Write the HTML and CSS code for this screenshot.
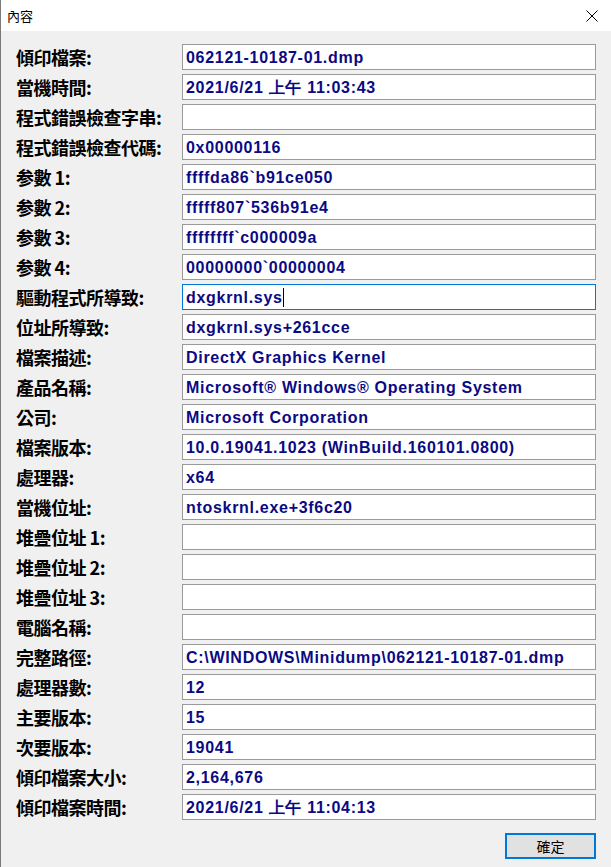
FILE: index.html
```html
<!DOCTYPE html>
<html lang="zh-Hant">
<head>
<meta charset="utf-8">
<title>內容</title>
<link rel="stylesheet" href="styles.css">
</head>
<body>
<div class="window">
  <div class="titlebar">
    <span class="title">內容</span>
    <svg class="close" width="12" height="12" viewBox="0 0 12 12"><path d="M0.5 0.5 L11.5 11.5 M11.5 0.5 L0.5 11.5" stroke="#000" stroke-width="1" fill="none"/></svg>
  </div>
  <div class="content">
    <div class="grid">
      <div class="label">傾印檔案:</div><div class="box">062121-10187-01.dmp</div>
      <div class="label">當機時間:</div><div class="box">2021/6/21 上午 11:03:43</div>
      <div class="label">程式錯誤檢查字串:</div><div class="box"></div>
      <div class="label">程式錯誤檢查代碼:</div><div class="box">0x00000116</div>
      <div class="label">参數 1:</div><div class="box">ffffda86`b91ce050</div>
      <div class="label">参數 2:</div><div class="box">fffff807`536b91e4</div>
      <div class="label">参數 3:</div><div class="box">ffffffff`c000009a</div>
      <div class="label">参數 4:</div><div class="box">00000000`00000004</div>
      <div class="label">驅動程式所導致:</div><div class="box focus">dxgkrnl.sys<span class="caret"></span></div>
      <div class="label">位址所導致:</div><div class="box">dxgkrnl.sys+261cce</div>
      <div class="label">檔案描述:</div><div class="box">DirectX Graphics Kernel</div>
      <div class="label">產品名稱:</div><div class="box">Microsoft® Windows® Operating System</div>
      <div class="label">公司:</div><div class="box">Microsoft Corporation</div>
      <div class="label">檔案版本:</div><div class="box">10.0.19041.1023 (WinBuild.160101.0800)</div>
      <div class="label">處理器:</div><div class="box">x64</div>
      <div class="label">當機位址:</div><div class="box">ntoskrnl.exe+3f6c20</div>
      <div class="label">堆疊位址 1:</div><div class="box"></div>
      <div class="label">堆疊位址 2:</div><div class="box"></div>
      <div class="label">堆疊位址 3:</div><div class="box"></div>
      <div class="label">電腦名稱:</div><div class="box"></div>
      <div class="label">完整路徑:</div><div class="box">C:\WINDOWS\Minidump\062121-10187-01.dmp</div>
      <div class="label">處理器數:</div><div class="box">12</div>
      <div class="label">主要版本:</div><div class="box">15</div>
      <div class="label">次要版本:</div><div class="box">19041</div>
      <div class="label">傾印檔案大小:</div><div class="box">2,164,676</div>
      <div class="label">傾印檔案時間:</div><div class="box">2021/6/21 上午 11:04:13</div>
    </div>
    <div class="actions">
      <div class="button">確定</div>
    </div>
  </div>
</div>
</body>
</html>
```
FILE: styles.css
```css
html, body {
  margin: 0;
  padding: 0;
  background: #f0f0f0;
}
.window {
  width: 611px;
  height: 867px;
  box-sizing: border-box;
  border-left: 1px solid #7a7a7a;
  background: #f0f0f0;
  overflow: hidden;
}
.titlebar {
  height: 31px;
  background: #ffffff;
  display: flex;
  align-items: center;
  justify-content: space-between;
  padding: 0 13px 0 6px;
}
.title {
  font-family: "Noto Sans CJK TC", sans-serif;
  font-size: 13px;
  color: #000;
  line-height: 1;
}
.close {
  display: block;
}
.content {
  padding: 13px 15px 0 15px;
}
.grid {
  display: grid;
  grid-template-columns: 166px 414px;
  grid-auto-rows: 26px;
  row-gap: 4px;
}
.label {
  font-family: "Noto Sans CJK TC", sans-serif;
  font-weight: 700;
  font-size: 18px;
  color: #000;
  display: flex;
  align-items: center;
  white-space: nowrap;
  letter-spacing: -0.5px;
}
.box {
  box-sizing: border-box;
  background: #fff;
  border: 1px solid #9a9a9a;
  font-family: "Liberation Sans", Arial, sans-serif;
  font-weight: 700;
  font-size: 16px;
  letter-spacing: 0.7px;
  color: #0a0a84;
  display: flex;
  align-items: center;
  padding: 2px 0 0 3px;
  white-space: nowrap;
  overflow: hidden;
}
.box.focus {
  border-color: #0078d7;
}
.caret {
  display: inline-block;
  width: 1px;
  height: 19px;
  background: #000;
  margin-top: -2px;
}
.actions {
  display: flex;
  justify-content: flex-end;
  margin-top: 13px;
}
.button {
  width: 91px;
  height: 26px;
  box-sizing: border-box;
  border: 2px solid #0078d7;
  background: #e1e1e1;
  font-family: "Noto Sans CJK TC", sans-serif;
  font-size: 14px;
  color: #000;
  display: flex;
  align-items: center;
  justify-content: center;
}
```
